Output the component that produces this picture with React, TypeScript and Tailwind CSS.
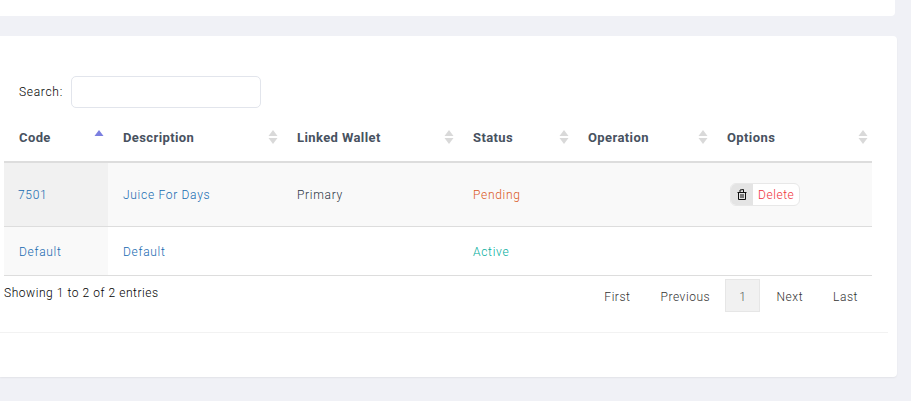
const cols = [
  { name: 'Code', width: 'w-[104px]', active: true },
  { name: 'Description', width: 'w-[174px]' },
  { name: 'Linked Wallet', width: 'w-[176px]' },
  { name: 'Status', width: 'w-[115px]' },
  { name: 'Operation', width: 'w-[139px]' },
  { name: 'Options', width: 'w-[160px]' },
];

function SortIcon({ active }: { active?: boolean }) {
  return (
    <svg width="10" height="16" viewBox="0 0 10 16" className="absolute right-[4px] top-[13px]">
      <path d="M5 1 L9.5 7 H0.5 Z" fill={active ? '#7b7fe0' : '#d9d9d9'} />
      {!active && <path d="M5 15 L9.5 9 H0.5 Z" fill="#d9d9d9" />}
    </svg>
  );
}

function TrashIcon() {
  return (
    <svg width="10" height="11" viewBox="0 0 10 11" fill="none" stroke="#111" strokeWidth="1">
      <path d="M0.5 3.5 H9.5" />
      <path d="M3 3 V1 L6.5 0.5 V3" />
      <path d="M1.5 3.5 V10.5 H8.5 V3.5" />
      <path d="M4 5 V9 M6 5 V9" />
    </svg>
  );
}

export default function App() {
  return (
    <div className="h-[401px] w-[911px] overflow-hidden bg-[#f0f1f6] font-['Roboto',sans-serif] text-[12px] font-light tracking-[0.7px] text-[#000]">
      <div className="mr-[16px] h-[16px] rounded-br-[4px] bg-white" />

      <div className="mr-[14px] mt-[20px] h-[341px] rounded-r-[4px] bg-white pt-[40px] shadow-[0_1px_2px_rgba(0,0,0,0.06)]">
        <div className="flex h-[32px] items-center pl-[19px]">
          <label className="mr-[8px]">Search:</label>
          <input className="h-[32px] w-[190px] rounded-[5px] border border-[#e2e5ec] bg-white outline-none" />
        </div>

        <div className="h-[217px] w-[888px] border-b border-[#f2f2f2]">
          <div className="ml-[4px] w-[868px]">
            <table className="mt-[8px] w-[868px] table-fixed border-collapse">
              <thead>
                <tr className="h-[46px] border-b-2 border-[#dddddd]">
                  {cols.map((c) => (
                    <th key={c.name} className={`${c.width} relative pb-[2px] pl-[15px] text-left text-[13px] font-bold tracking-[0.4px] text-[#48525f]`}>
                      {c.name}
                      <SortIcon active={c.active} />
                    </th>
                  ))}
                </tr>
              </thead>
              <tbody>
                <tr className="h-[64px] border-b border-[#dddddd] bg-[#f9f9f9]">
                  <td className="bg-[#f1f1f1] pl-[14px] pt-[2px] text-[#1569b0]">7501</td>
                  <td className="pl-[15px] pt-[2px] text-[#1569b0]">Juice For Days</td>
                  <td className="pl-[15px] pt-[2px] text-[#2c3644]">Primary</td>
                  <td className="pl-[15px] pt-[2px] text-[#d9581a]">Pending</td>
                  <td />
                  <td className="pl-[18px]">
                    <span className="inline-flex h-[23px] w-[70px] items-center overflow-hidden rounded-[6px] border border-[#e8e8e8] bg-white">
                      <span className="flex h-full w-[22px] items-center justify-center bg-[#e4e4e4]">
                        <TrashIcon />
                      </span>
                      <span className="pl-[5px] pt-[2px] tracking-[0.55px] text-[#f0303c]">Delete</span>
                    </span>
                  </td>
                </tr>
                <tr className="h-[49px] border-b border-[#dddddd]">
                  <td className="bg-[#f9f9f9] pl-[15px] pt-[2px] text-[#1569b0]">Default</td>
                  <td className="pl-[15px] pt-[2px] text-[#1569b0]">Default</td>
                  <td />
                  <td className="pl-[15px] pt-[2px] text-[#00ad9c]">Active</td>
                  <td />
                  <td />
                </tr>
              </tbody>
            </table>

            <div className="flex items-start justify-between tracking-[0.55px]">
              <div className="pt-[8px]">Showing 1 to 2 of 2 entries</div>
              <div className="-mr-[1px] flex pt-[3px] text-[#333]">
                {['First', 'Previous', '1', 'Next', 'Last'].map((p) => (
                  <span
                    key={p}
                    className={
                      p === '1'
                        ? 'mr-[1px] flex h-[33px] items-center border border-[#e6e6e6] bg-[#f1f1f1] px-[13px] pt-[4px] text-[#555]'
                        : 'flex h-[33px] items-center px-[15px] pt-[4px]'
                    }
                  >
                    {p}
                  </span>
                ))}
              </div>
            </div>
          </div>
        </div>
      </div>
    </div>
  );
}
